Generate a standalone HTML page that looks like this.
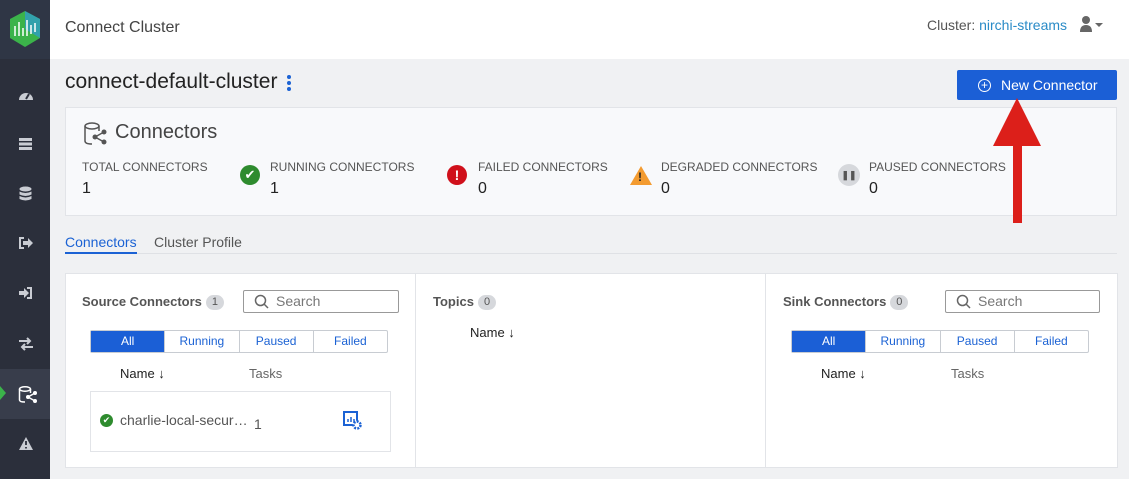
<!DOCTYPE html><html><head><style>
*{box-sizing:border-box;margin:0;padding:0}
body{width:1129px;height:479px;overflow:hidden;background:#f0f1f3;font-family:"Liberation Sans",sans-serif;position:relative;color:#333}
.a{position:absolute}
.side{left:0;top:0;width:50px;height:479px;background:#2b2f3b}
.logo{left:0;top:0;width:50px;height:59px;background:#2f3645}
.hdr{left:50px;top:0;width:1079px;height:59px;background:#fff}
.si{position:absolute;left:18px}
.lbl{font-size:12px;color:#555}
.num{font-size:16px;color:#222}
.panel{background:#fff;border:1px solid #e2e4e8}
.seg{position:absolute;height:23px;border:1px solid #c8ccd2;border-radius:2px;display:flex;font-size:12px}
.seg div{flex:1;text-align:center;line-height:21px;color:#1b62d4;border-left:1px solid #c8ccd2}
.seg div:first-child{background:#1b5fd6;color:#fff;border-left:none}
.srch{position:absolute;height:23px;border:1px solid #999;border-radius:2px;font-size:14px;color:#777;line-height:21px;padding-left:32px}
.badge{display:inline-block;background:#d6d8dc;border-radius:9px;font-size:11px;font-weight:normal;color:#555;padding:0 6px;line-height:15px;margin-left:4px;vertical-align:1px}
.h{font-size:13px;font-weight:bold;color:#555}
</style></head><body>
<div class="a side"></div>
<div class="a logo"><svg width="50" height="59"><polygon points="25,11 40,19 40,38 25,47 10,38 10,19" fill="#3bb34a"/><polygon points="25,11 40,19 40,38 25,29" fill="#2f9ad6" opacity=".7"/><path d="M15 26v10M19 22v14M23 28v8M27 20v16M31 25v9M35 23v9" stroke="#fff" stroke-width="1.5"/></svg></div>
<svg class="si" style="top:88px" width="16" height="14"><path d="M1 12a7 7 0 0 1 14 0z" fill="#c9ccd3"/><path d="M8 11l3-5" stroke="#2b2f3b" stroke-width="2"/></svg>
<svg class="si" style="top:137px" width="16" height="14"><rect x="1" y="1" width="13" height="3" fill="#c9ccd3"/><rect x="1" y="5.5" width="13" height="3" fill="#c9ccd3"/><rect x="1" y="10" width="13" height="3" fill="#c9ccd3"/></svg>
<svg class="si" style="top:186px" width="16" height="15"><ellipse cx="7.5" cy="3" rx="6" ry="2.5" fill="#c9ccd3"/><path d="M1.5 5.5v3q6 3 12 0v-3q-6 3-12 0zM1.5 10v3q6 3 12 0v-3q-6 3-12 0z" fill="#c9ccd3"/></svg>
<svg class="si" style="top:236px" width="16" height="14"><path d="M6 2H2v10h4" fill="none" stroke="#c9ccd3" stroke-width="2"/><path d="M5 5h5V2l5 5-5 5V9H5z" fill="#c9ccd3"/></svg>
<svg class="si" style="top:286px" width="16" height="14"><path d="M9 2h4v10H9" fill="none" stroke="#c9ccd3" stroke-width="2"/><path d="M1 5h5V2l5 5-5 5V9H1z" fill="#c9ccd3"/></svg>
<svg class="si" style="top:337px" width="16" height="14"><path d="M1 4h11M9 1l3 3-3 3M15 10H4M7 7l-3 3 3 3" fill="none" stroke="#c9ccd3" stroke-width="2"/></svg>
<div class="a" style="left:0;top:369px;width:50px;height:50px;background:#383d4b"></div>
<div class="a" style="left:0;top:386px;width:0;height:0;border-left:6px solid #3bb34a;border-top:7px solid transparent;border-bottom:7px solid transparent"></div>
<svg class="si" style="top:386px" width="20" height="18"><ellipse cx="7" cy="3" rx="5.5" ry="2.2" fill="none" stroke="#fff" stroke-width="1.5"/><path d="M1.5 3v11q0 2 5.5 2M12.5 3v4" fill="none" stroke="#fff" stroke-width="1.5"/><circle cx="10" cy="11" r="2" fill="#fff"/><circle cx="17" cy="7" r="2" fill="#fff"/><circle cx="17" cy="15" r="2" fill="#fff"/><path d="M10 11l7-4M10 11l7 4" stroke="#fff" stroke-width="1.5"/></svg>
<svg class="si" style="top:436px" width="16" height="14"><path d="M8 1l7 13H1z" fill="#c9ccd3"/><path d="M8 5v4M8 11v1.5" stroke="#2b2f3b" stroke-width="1.8"/></svg>
<div class="a hdr"></div>
<div class="a" style="left:65px;top:19px;font-size:16px;color:#444">Connect Cluster</div>
<div class="a" style="left:927px;top:17px;font-size:14px;color:#555">Cluster: <span style="color:#2a8bc7">nirchi-streams</span></div>
<div class="a" style="left:1080px;top:15px;width:24px;height:18px"><svg width="24" height="18"><circle cx="6" cy="5" r="4" fill="#666"/><path d="M0 17q0-7 6-7t6 7z" fill="#666"/><path d="M15 8h8l-4 4z" fill="#666"/></svg></div>
<div class="a" style="left:65px;top:70px;font-size:21px;color:#222">connect-default-cluster</div>
<div class="a" style="left:287px;top:75px;width:4px"><div style="width:4px;height:4px;border-radius:2px;background:#1b62d4;margin-bottom:2px"></div><div style="width:4px;height:4px;border-radius:2px;background:#1b62d4;margin-bottom:2px"></div><div style="width:4px;height:4px;border-radius:2px;background:#1b62d4"></div></div>
<div class="a" style="left:957px;top:70px;width:160px;height:30px;background:#1b5fd6;border-radius:2px;color:#fff;font-size:14px;line-height:30px;padding-left:44px">New Connector</div>
<div class="a" style="left:978px;top:79px;width:13px;height:13px;border:1.5px solid #fff;border-radius:50%;color:#fff;font-size:12px;line-height:10px;text-align:center">+</div>
<div class="a" style="left:65px;top:107px;width:1052px;height:109px;background:#f8f9fb;border:1px solid #e2e4e8"></div>
<div class="a" style="left:83px;top:122px"><svg width="26" height="24"><ellipse cx="9" cy="4" rx="7" ry="3" fill="none" stroke="#555" stroke-width="1.5"/><path d="M2 4v15q0 3 7 3M16 4v5" fill="none" stroke="#555" stroke-width="1.5"/><circle cx="12" cy="15" r="2.5" fill="#555"/><circle cx="21" cy="10" r="2.5" fill="#555"/><circle cx="21" cy="20" r="2.5" fill="#555"/><path d="M12 15L21 10M12 15L21 20" stroke="#555" stroke-width="1.5"/></svg></div>
<div class="a" style="left:115px;top:121px;font-size:20px;color:#444">Connectors</div>
<div class="a lbl" style="left:82px;top:160px">TOTAL CONNECTORS</div><div class="a num" style="left:82px;top:180px">1</div>
<div class="a" style="left:240px;top:165px;width:20px;height:20px;border-radius:50%;background:#2e8b2e;color:#fff;font-size:13px;text-align:center;line-height:20px">✔</div>
<div class="a lbl" style="left:270px;top:160px">RUNNING CONNECTORS</div><div class="a num" style="left:270px;top:180px">1</div>
<div class="a" style="left:447px;top:165px;width:20px;height:20px;border-radius:50%;background:#d0101b;color:#fff;font-size:14px;font-weight:bold;text-align:center;line-height:20px">!</div>
<div class="a lbl" style="left:478px;top:160px">FAILED CONNECTORS</div><div class="a num" style="left:478px;top:180px">0</div>
<div class="a" style="left:630px;top:166px;width:0;height:0;border-left:11px solid transparent;border-right:11px solid transparent;border-bottom:19px solid #f39b30"></div>
<div class="a" style="left:638px;top:170px;font-size:12px;font-weight:bold;color:#222">!</div>
<div class="a lbl" style="left:661px;top:160px">DEGRADED CONNECTORS</div><div class="a num" style="left:661px;top:180px">0</div>
<div class="a" style="left:838px;top:164px;width:22px;height:22px;border-radius:50%;background:#d6d8dc;color:#555;font-size:9px;text-align:center;line-height:22px;font-weight:bold">❚❚</div>
<div class="a lbl" style="left:869px;top:160px">PAUSED CONNECTORS</div><div class="a num" style="left:869px;top:180px">0</div>
<div class="a" style="left:65px;top:234px;font-size:14px;color:#1b62d4">Connectors</div>
<div class="a" style="left:154px;top:234px;font-size:14px;color:#555">Cluster Profile</div>
<div class="a" style="left:65px;top:253px;width:1052px;height:1px;background:#dfe1e5"></div>
<div class="a" style="left:65px;top:252px;width:72px;height:2px;background:#1b62d4"></div>
<div class="a panel" style="left:65px;top:273px;width:351px;height:195px"></div>
<div class="a panel" style="left:415px;top:273px;width:351px;height:195px"></div>
<div class="a panel" style="left:765px;top:273px;width:353px;height:195px"></div>
<div class="a h" style="left:82px;top:294px">Source Connectors<span class="badge">1</span></div>
<div class="srch" style="left:243px;top:290px;width:156px">Search</div>
<svg class="a" style="left:254px;top:294px" width="16" height="16"><circle cx="6.5" cy="6.5" r="5" fill="none" stroke="#666" stroke-width="1.5"/><path d="M10 10l4 4" stroke="#666" stroke-width="1.5"/></svg>
<div class="seg" style="left:90px;top:330px;width:298px"><div>All</div><div>Running</div><div>Paused</div><div>Failed</div></div>
<div class="a" style="left:120px;top:366px;font-size:13px;color:#222">Name ↓</div>
<div class="a" style="left:249px;top:366px;font-size:13px;color:#666">Tasks</div>
<div class="a" style="left:90px;top:391px;width:301px;height:61px;border:1px solid #e2e4e8;background:#fff"></div>
<div class="a" style="left:100px;top:414px;width:13px;height:13px;border-radius:50%;background:#2e8b2e;color:#fff;font-size:9px;text-align:center;line-height:13px">✔</div>
<div class="a" style="left:120px;top:412px;font-size:14px;color:#555;width:132px;white-space:nowrap;overflow:hidden;text-overflow:ellipsis">charlie-local-secure-connector</div>
<div class="a" style="left:254px;top:416px;font-size:14px;color:#555">1</div>
<svg class="a" style="left:343px;top:411px" width="20" height="20"><rect x="1" y="1" width="13" height="13" fill="none" stroke="#1b62d4" stroke-width="2"/><path d="M5 11V8M8 11V6M11 11V8" stroke="#1b62d4" stroke-width="1.5"/><circle cx="14" cy="14" r="4.5" fill="#fff"/><circle cx="14" cy="14" r="3.5" fill="none" stroke="#1b62d4" stroke-width="2.5" stroke-dasharray="2 1.2"/></svg>
<div class="a h" style="left:433px;top:294px">Topics<span class="badge">0</span></div>
<div class="a" style="left:470px;top:325px;font-size:13px;color:#222">Name ↓</div>
<div class="a h" style="left:783px;top:294px">Sink Connectors<span class="badge">0</span></div>
<div class="srch" style="left:945px;top:290px;width:155px">Search</div>
<svg class="a" style="left:956px;top:294px" width="16" height="16"><circle cx="6.5" cy="6.5" r="5" fill="none" stroke="#666" stroke-width="1.5"/><path d="M10 10l4 4" stroke="#666" stroke-width="1.5"/></svg>
<div class="seg" style="left:791px;top:330px;width:298px"><div>All</div><div>Running</div><div>Paused</div><div>Failed</div></div>
<div class="a" style="left:821px;top:366px;font-size:13px;color:#222">Name ↓</div>
<div class="a" style="left:951px;top:366px;font-size:13px;color:#666">Tasks</div>
<svg class="a" style="left:990px;top:96px" width="56" height="130"><polygon points="27,2 51,50 3,50" fill="#dc1f1a"/><rect x="23" y="48" width="9" height="79" fill="#dc1f1a"/></svg>
</body></html>
